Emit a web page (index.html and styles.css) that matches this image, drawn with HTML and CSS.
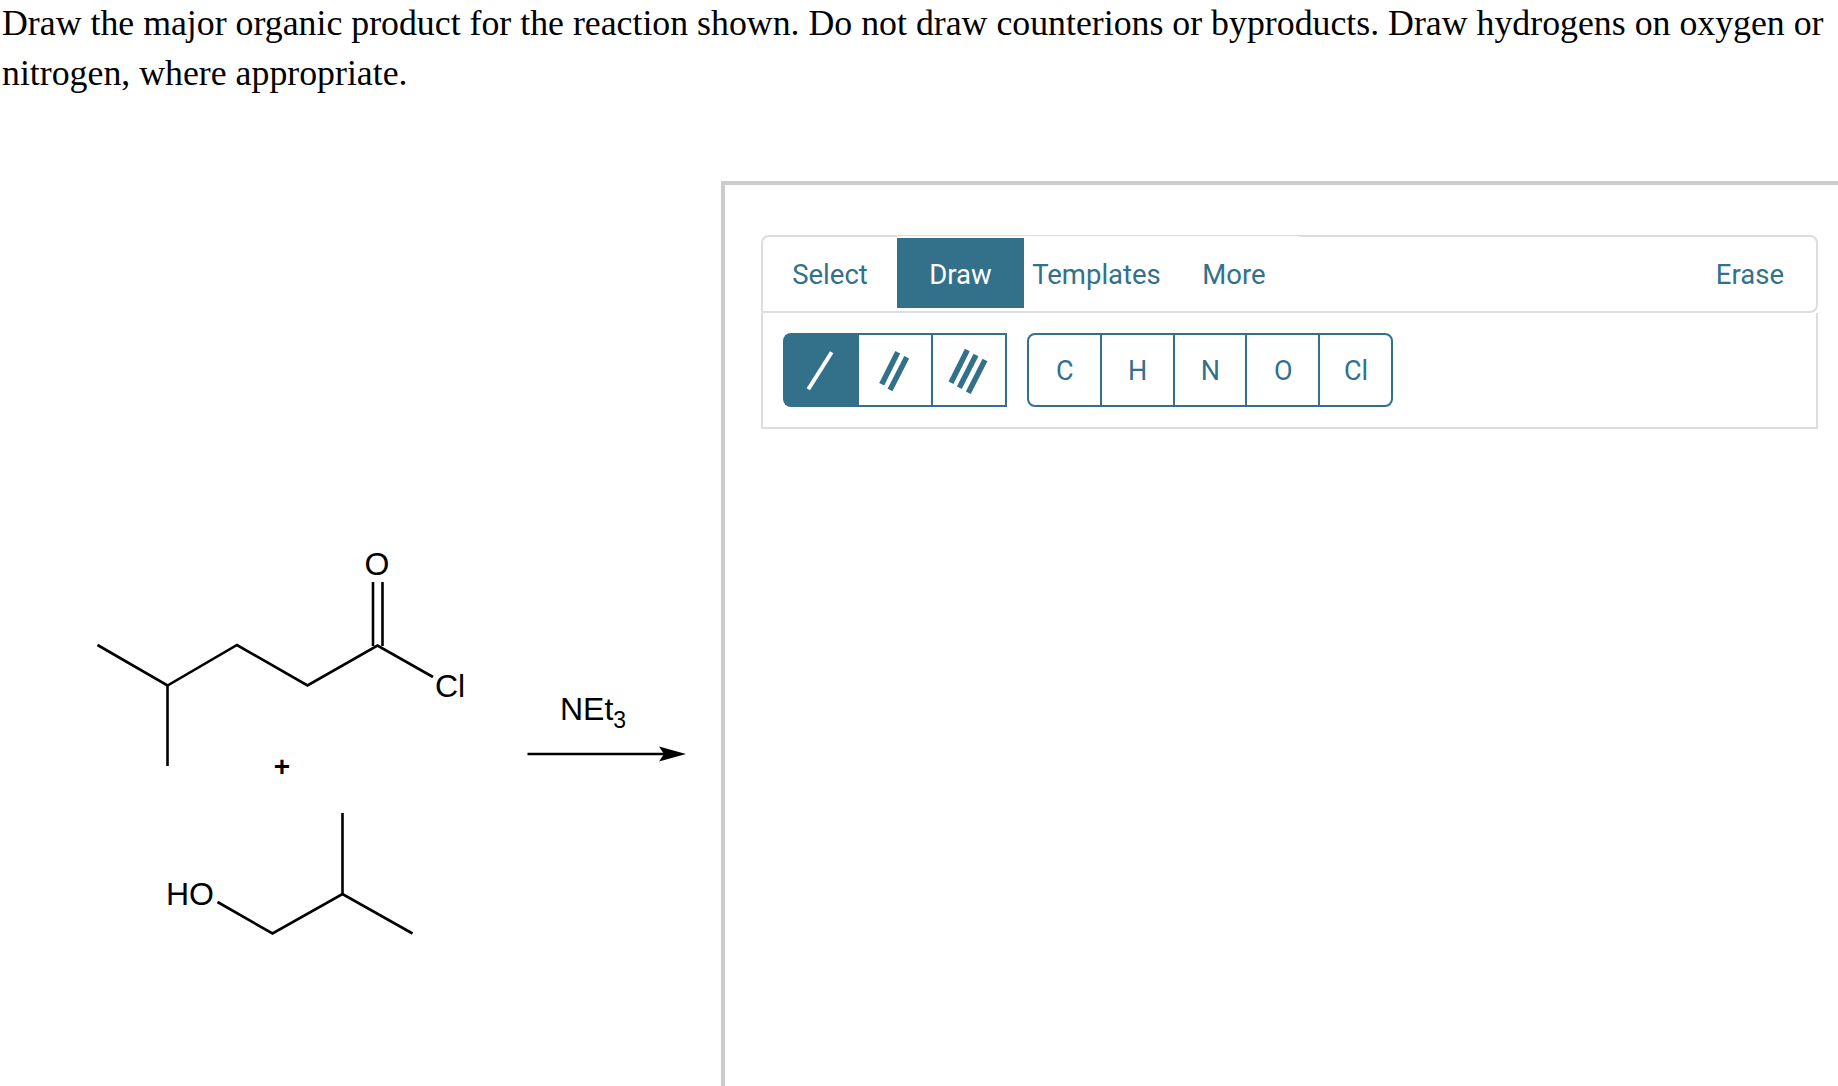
FILE: index.html
```html
<!DOCTYPE html>
<html lang="en">
<head>
    <meta charset="UTF-8">
    <title>Draw the major organic product</title>
    <link rel="stylesheet" href="styles.css">
</head>
<body>
    <p class="question">Draw the major organic product for the reaction shown. Do not draw counterions or byproducts. Draw hydrogens on oxygen or nitrogen, where appropriate.</p>
    <div class="problem">
        <svg class="reaction" viewBox="0 181 721 905" width="721" height="905">
            <g class="bonds">
                <polyline points="97.5,645 167.5,685.5 237,645 307.5,685.5 377.5,645.5 433,677"/>
                <line x1="167.5" y1="685" x2="167.5" y2="766"/>
                <line x1="373" y1="582" x2="373" y2="646"/>
                <line x1="382.5" y1="582" x2="382.5" y2="646"/>
                <polyline points="217.5,902 272.5,933.5 342.5,894 412.5,933.5"/>
                <line x1="342.5" y1="894" x2="342.5" y2="813"/>
                <line x1="527.5" y1="754" x2="670" y2="754"/>
            </g>
            <polygon points="686,754 659,746.5 664,754 659,761.5"/>
            <text x="377" y="575" text-anchor="middle">O</text>
            <text x="435" y="697">Cl</text>
            <text x="166" y="905">HO</text>
            <text x="560" y="720">NEt<tspan class="sub" dy="8">3</tspan></text>
            <text class="plus" x="282" y="776" text-anchor="middle">+</text>
        </svg>
        <div class="panel">
            <div class="tabs">
                <div class="tab tab-select">Select</div>
                <div class="tab tab-draw">Draw</div>
                <div class="tab tab-templates">Templates</div>
                <div class="tab tab-more">More</div>
                <div class="tab tab-erase">Erase</div>
            </div>
            <div class="tools">
                <div class="btn-group bonds-group">
                    <div class="btn active">
                        <svg viewBox="0 0 74 70" width="74" height="70"><line x1="23.3" y1="54.3" x2="46.7" y2="17.3"/></svg>
                    </div>
                    <div class="btn">
                        <svg viewBox="0 0 72 70" width="72" height="70"><line x1="22.7" y1="49.3" x2="38.7" y2="17.3"/><line x1="31" y1="55" x2="47.7" y2="22.3"/></svg>
                    </div>
                    <div class="btn">
                        <svg viewBox="0 0 72 70" width="72" height="70"><line x1="18" y1="47.7" x2="34.3" y2="15"/><line x1="26.3" y1="52.7" x2="43" y2="20"/><line x1="35.3" y1="57.7" x2="52" y2="25"/></svg>
                    </div>
                </div>
                <div class="btn-group atoms-group">
                    <div class="btn">C</div>
                    <div class="btn">H</div>
                    <div class="btn">N</div>
                    <div class="btn">O</div>
                    <div class="btn">Cl</div>
                </div>
            </div>
        </div>
    </div>
</body>
</html>
```

FILE: styles.css
```css
html, body {
    height: 100%;
}

body {
    margin: 0;
    display: flex;
    flex-direction: column;
    background-color: #ffffff;
    overflow: hidden;
}

.question {
    margin: -2px 0 83px 0;
    padding-left: 2px;
    font-family: "Liberation Serif", serif;
    font-size: 35.8px;
    line-height: 50px;
    color: #000000;
}

.problem {
    flex: 1;
    display: flex;
}

.reaction {
    flex: none;
    display: block;
}

.bonds line, .bonds polyline {
    fill: none;
    stroke: #000000;
    stroke-width: 2.6;
}

.reaction text {
    font-family: "Liberation Sans", Arial, sans-serif;
    font-size: 32px;
    fill: #000000;
}

.reaction .sub {
    font-size: 23px;
}

.reaction .plus {
    font-size: 28px;
    font-weight: bold;
}

.panel {
    flex: 1;
    border-top: 4px solid #cccccc;
    border-left: 4px solid #cccccc;
    padding: 50px 20px 0 36px;
    font-family: Roboto, sans-serif;
    color: #33718b;
}

.tabs {
    display: flex;
    height: 74px;
    border: 2px solid #dddddd;
    border-radius: 8px 8px 8px 2px;
    font-size: 27.5px;
}

.tab {
    height: 68px;
    padding-top: 2px;
    margin-top: 1px;
    display: flex;
    align-items: center;
    justify-content: center;
}

.tab-select { width: 134px; }
.tab-draw { width: 127px; background-color: #33718b; color: #ffffff; }
.tab-templates { width: 145px; }
.tab-more { width: 130px; }
.tab-erase { margin-left: auto; padding-right: 32px; }

/* these three sit over the top border and thin it out */
.tab-draw, .tab-templates, .tab-more {
    box-shadow: 0 -2px 0 #ffffff;
}

.tools {
    display: flex;
    gap: 20px;
    height: 74px;
    padding: 20px;
    border: 2px solid #dddddd;
    border-top: none;
}

.btn-group {
    display: flex;
    border: 2px solid #33718b;
}

.bonds-group {
    border-radius: 8px 0 0 8px;
}

.atoms-group {
    border-radius: 8px;
    font-size: 27px;
}

.atoms-group .btn {
    width: 69.8px;
    padding: 2px 0 0 1px;
}

.btn {
    width: 72px;
    display: flex;
    align-items: center;
    justify-content: center;
    border-left: 2px solid #33718b;
}

.btn:first-child, .btn.active + .btn {
    border-left: none;
}

.btn svg {
    display: block;
}

.btn line {
    stroke: #33718b;
    stroke-width: 5.5;
}

.btn.active {
    width: 74px;
    background-color: #33718b;
}

.btn.active line {
    stroke: #ffffff;
    stroke-width: 4;
}
```
